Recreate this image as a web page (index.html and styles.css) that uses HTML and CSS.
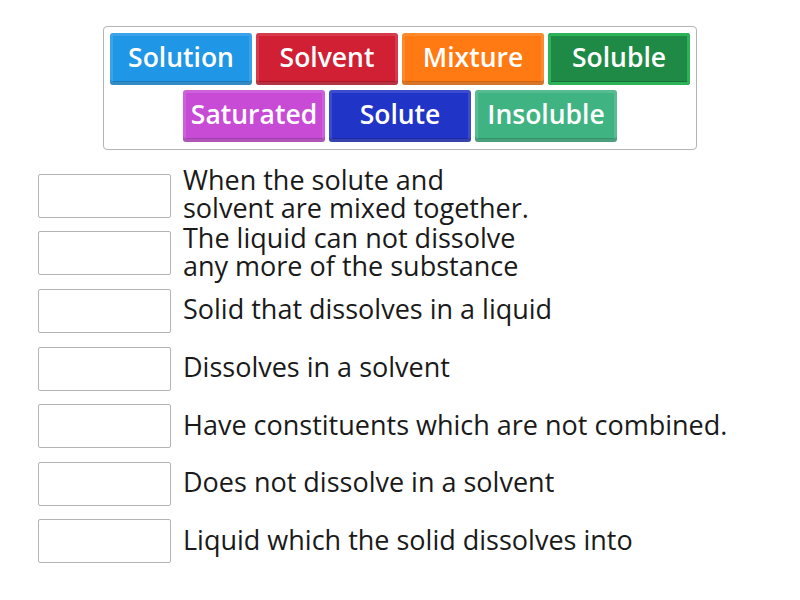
FILE: index.html
```html
<!DOCTYPE html>
<html>
<head>
<meta charset="utf-8">
<link rel="stylesheet" href="styles.css">
</head>
<body>
<div class="page">
  <div class="bank">
    <div class="bank-row">
      <div class="tile t-solution">Solution</div>
      <div class="tile t-solvent">Solvent</div>
      <div class="tile t-mixture">Mixture</div>
      <div class="tile t-soluble">Soluble</div>
    </div>
    <div class="bank-row">
      <div class="tile t-saturated">Saturated</div>
      <div class="tile t-solute">Solute</div>
      <div class="tile t-insoluble">Insoluble</div>
    </div>
  </div>
  <div class="items">
    <div class="item"><div class="slot"></div><div class="desc">When the solute and<br>solvent are mixed together.</div></div>
    <div class="item"><div class="slot"></div><div class="desc">The liquid can not dissolve<br>any more of the substance</div></div>
    <div class="item"><div class="slot"></div><div class="desc">Solid that dissolves in a liquid</div></div>
    <div class="item"><div class="slot"></div><div class="desc">Dissolves in a solvent</div></div>
    <div class="item"><div class="slot"></div><div class="desc">Have constituents which are not combined.</div></div>
    <div class="item"><div class="slot"></div><div class="desc">Does not dissolve in a solvent</div></div>
    <div class="item"><div class="slot"></div><div class="desc">Liquid which the solid dissolves into</div></div>
  </div>
</div>
</body>
</html>
```
FILE: styles.css
```css
html, body {
  margin: 0;
  padding: 0;
  background: #fff;
}
body {
  font-family: "Open Sans", "Liberation Sans", sans-serif;
  color: #1a1a1a;
}
.page {
  width: 800px;
  height: 600px;
  position: relative;
}
.bank {
  box-sizing: border-box;
  margin: 26px 0 0 103px;
  width: 594px;
  height: 124px;
  border: 1px solid #b4b4b4;
  border-radius: 4px;
  padding: 6px 6px 0 6px;
  display: flex;
  flex-direction: column;
  gap: 5px;
}
.bank-row {
  display: flex;
  justify-content: center;
  gap: 4px;
}
.tile {
  box-sizing: border-box;
  width: 142px;
  height: 52px;
  border-radius: 3px;
  color: #fff;
  font-weight: 600;
  font-size: 26.5px;
  display: flex;
  align-items: center;
  justify-content: center;
  padding-bottom: 5px;
  box-shadow: inset 0 0 0 3px rgba(255,255,255,0.12), inset 0 -4px 0 rgba(0,0,0,0.18);
}
.t-solution { background: #1f96e6; }
.t-solvent { background: #d11f33; }
.t-mixture { background: #ff7a12; }
.t-soluble { background: #1f8a46; box-shadow: inset 0 0 0 3px #2cb257, inset 0 -4px 0 rgba(0,0,0,0.18); }
.t-saturated { background: #c84bd6; }
.t-solute { background: #2134c8; }
.t-insoluble { background: #40b383; }
.items {
  margin-top: 17px;
  display: flex;
  flex-direction: column;
}
.item {
  height: 57.6px;
  display: flex;
  align-items: center;
  padding-left: 38px;
}
.slot {
  box-sizing: border-box;
  width: 133px;
  height: 44px;
  border: 1px solid #b4b4b4;
  border-radius: 2px;
  flex: none;
}
.desc {
  margin-left: 12px;
  font-size: 27px;
  line-height: 28px;
  color: #1a1a1a;
  padding-bottom: 3px;
}
```
